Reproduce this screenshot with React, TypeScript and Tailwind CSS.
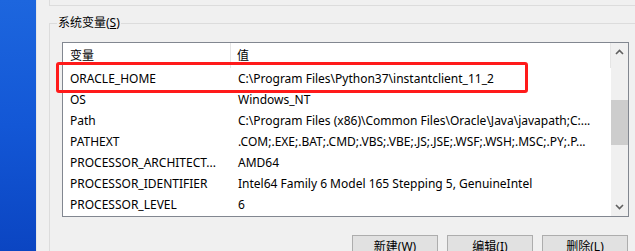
import React from 'react';

const rows: [string, string][] = [
  ['ORACLE_HOME', 'C:\\Program Files\\Python37\\instantclient_11_2'],
  ['OS', 'Windows_NT'],
  ['Path', 'C:\\Program Files (x86)\\Common Files\\Oracle\\Java\\javapath;C:...'],
  ['PATHEXT', '.COM;.EXE;.BAT;.CMD;.VBS;.VBE;.JS;.JSE;.WSF;.WSH;.MSC;.PY;.P...'],
  ['PROCESSOR_ARCHITECT...', 'AMD64'],
  ['PROCESSOR_IDENTIFIER', 'Intel64 Family 6 Model 165 Stepping 5, GenuineIntel'],
  ['PROCESSOR_LEVEL', '6'],
];

export default function App() {
  return (
    <div
      className="relative flex w-[635px] h-[251px] overflow-hidden text-[12px] text-black"
      style={{ fontFamily: '"Noto Sans", "Noto Sans CJK SC", sans-serif' }}
    >
      {/* desktop edge */}
      <div className="w-[36px] shrink-0 bg-gradient-to-b from-[#1d66de] via-[#1357d6] to-[#0b45c2]" />

      <div className="flex-1 min-h-0 bg-[#f0f0f0] border-l border-[#e6e6e6] flex flex-col overflow-hidden">
        {/* bottom of user variables group */}
        <div className="ml-[12px] h-[6px] shrink-0 border-l border-b border-[#dcdcdc]" />

        {/* system variables group */}
        <div className="relative ml-[12px] mt-[17px] shrink-0 border-l border-t border-[#dcdcdc] flex flex-col">
          <span className="absolute -top-[10px] left-[7px] bg-[#f0f0f0] px-[1px] leading-[18px]">
            系统变量(<span className="underline">S</span>)
          </span>

          <div className="ml-[12px] mt-[18px] w-[567px] h-[175px] shrink-0 border border-[#828790] bg-white flex overflow-hidden">
            <div className="flex-1 flex flex-col">
              <div className="h-[25px] flex shrink-0">
                <div className="w-[168px] pl-[7px] flex items-center border-r border-[#e5e5e5]">变量</div>
                <div className="flex-1 pl-[6px] flex items-center border-r border-[#e5e5e5]">值</div>
              </div>
              {rows.map(([name, value]) => (
                <div key={name} className="h-[21px] flex shrink-0 items-center whitespace-nowrap">
                  <div className="w-[169px] pl-[7px]">{name}</div>
                  <div className="flex-1 pl-[6px]">{value}</div>
                </div>
              ))}
            </div>

            {/* scrollbar */}
            <div className="w-[17px] shrink-0 bg-[#f0f0f0] flex flex-col items-center">
              <svg width="9" height="6" viewBox="0 0 9 6" className="mt-[6px]">
                <path d="M1 5 L4.5 1.5 L8 5" fill="none" stroke="#606060" strokeWidth="1.6" />
              </svg>
              <div className="mt-[45px] w-[17px] h-[45px] bg-[#cdcdcd]" />
              <div className="flex-1" />
              <svg width="9" height="6" viewBox="0 0 9 6" className="mb-[6px]">
                <path d="M1 1 L4.5 4.5 L8 1" fill="none" stroke="#606060" strokeWidth="1.6" />
              </svg>
            </div>
          </div>

          <div className="mt-[18px] flex justify-end gap-[9px] pr-[7px]">
            {['新建(W)', '编辑(I)', '删除(L)'].map((label) => (
              <div
                key={label}
                className="w-[86px] h-[23px] shrink-0 bg-[#e1e1e1] border border-[#adadad] flex items-center justify-center"
              >
                {label}
              </div>
            ))}
          </div>
        </div>
      </div>

      {/* highlight */}
      <div className="absolute left-[56px] top-[62px] w-[472px] h-[31px] border-[3px] border-[#ff1a1a] rounded-[3px]" />
    </div>
  );
}
